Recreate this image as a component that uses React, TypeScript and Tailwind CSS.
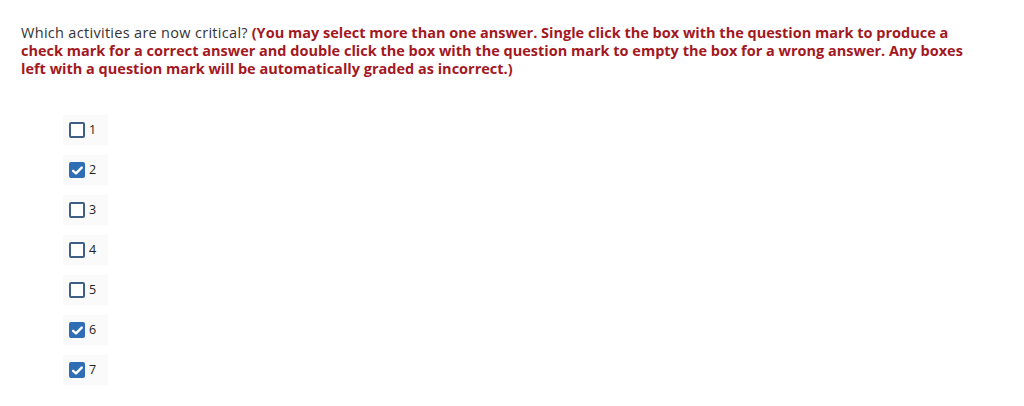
import { useState } from 'react'

const OPTIONS = [
  { label: '1', checked: false },
  { label: '2', checked: true },
  { label: '3', checked: false },
  { label: '4', checked: false },
  { label: '5', checked: false },
  { label: '6', checked: true },
  { label: '7', checked: true },
]

function Box({ checked }: { checked: boolean }) {
  if (checked) {
    return (
      <span className="w-[16px] h-[16px] rounded-[2px] bg-[#2f6db5] flex items-center justify-center">
        <svg viewBox="0 0 16 16" className="w-[13px] h-[13px]">
          <path d="M2.6 8.4 L6.2 11.6 L13.2 4.4" fill="none" stroke="#fff" strokeWidth="3" strokeLinecap="round" strokeLinejoin="round" />
        </svg>
      </span>
    )
  }
  return <span className="w-[16px] h-[16px] rounded-[2px] border-2 border-[#3f5f86] bg-white box-border" />
}

export default function App() {
  const [opts, setOpts] = useState(OPTIONS)

  const toggle = (i: number) =>
    setOpts((o) => o.map((x, j) => (j === i ? { ...x, checked: !x.checked } : x)))

  return (
    <div className="w-[1024px] h-[406px] bg-white pt-[24px] pl-[21px]" style={{ fontFamily: '"Open Sans", sans-serif' }}>
      <p className="text-[14.5px] leading-[18px] text-[#333] w-[950px]">
        <span className="tracking-[0.3px]">Which activities are now critical?</span>{' '}
        <span className="font-bold text-[#a3181f]">
          (You may select more than one answer. Single click the box with the question mark to produce a check mark for a correct answer and double click the box with the question mark to empty the box for a wrong answer. Any boxes left with a question mark will be automatically graded as incorrect.)
        </span>
      </p>

      <div className="mt-[37px] ml-[42px] flex flex-col gap-[10px]">
        {opts.map((o, i) => (
          <div
            key={o.label}
            onClick={() => toggle(i)}
            className="w-[45px] h-[30px] bg-[#fafafa] flex items-center pl-[6px] gap-[4px] cursor-pointer"
          >
            <Box checked={o.checked} />
            <span className="text-[12.5px] text-[#222]">{o.label}</span>
          </div>
        ))}
      </div>
    </div>
  )
}
